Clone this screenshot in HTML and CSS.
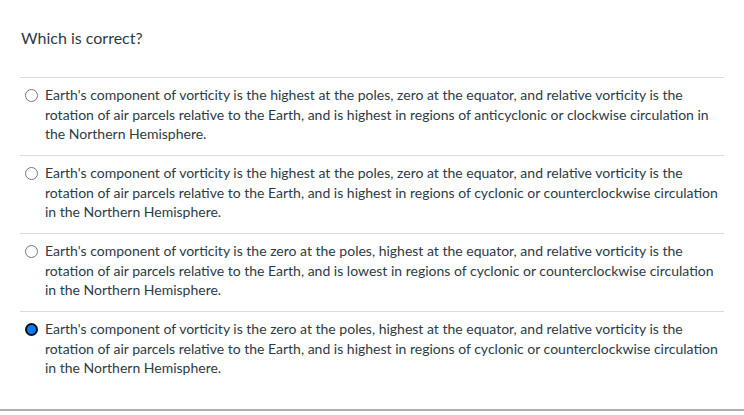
FILE: index.html
```html
<!DOCTYPE html>
<html>
<head>
<meta charset="utf-8">
<link rel="stylesheet" href="styles.css">
</head>
<body>
<div class="quiz">
  <div class="question">Which is correct?</div>
  <div class="answers">
    <label class="answer">
      <span class="radio"></span>
      <span class="text">Earth's component of vorticity is the highest at the poles, zero at the equator, and relative vorticity is the rotation of air parcels relative to the Earth, and is highest in regions of anticyclonic or clockwise circulation in the Northern Hemisphere.</span>
    </label>
    <label class="answer">
      <span class="radio"></span>
      <span class="text">Earth's component of vorticity is the highest at the poles, zero at the equator, and relative vorticity is the rotation of air parcels relative to the Earth, and is highest in regions of cyclonic or counterclockwise circulation in the Northern Hemisphere.</span>
    </label>
    <label class="answer">
      <span class="radio"></span>
      <span class="text">Earth's component of vorticity is the zero at the poles, highest at the equator, and relative vorticity is the rotation of air parcels relative to the Earth, and is lowest in regions of cyclonic or counterclockwise circulation in the Northern Hemisphere.</span>
    </label>
    <label class="answer last">
      <span class="radio checked"></span>
      <span class="text">Earth's component of vorticity is the zero at the poles, highest at the equator, and relative vorticity is the rotation of air parcels relative to the Earth, and is highest in regions of cyclonic or counterclockwise circulation in the Northern Hemisphere.</span>
    </label>
  </div>
</div>
</body>
</html>
```
FILE: styles.css
```css
html, body {
  margin: 0;
  padding: 0;
  background: #fff;
}
body {
  font-family: Lato, "Open Sans", sans-serif;
  color: #2d3b45;
}
.quiz {
  width: 744px;
  border-bottom: 2px solid #b0b0b0;
}
.question {
  font-size: 16px;
  line-height: 20px;
  padding: 28px 0 0 21px;
  height: 49px;
}
.answers {
  margin: 0 20px;
}
.answer {
  display: flex;
  align-items: flex-start;
  border-top: 1px solid #dcdcdc;
  padding: 7px 0 11px 5px;
  min-height: 59px;
}
.answer.last {
  padding-bottom: 31px;
}
.radio {
  flex: none;
  box-sizing: border-box;
  width: 13px;
  height: 13px;
  border-radius: 50%;
  border: 1px solid #777;
  margin-top: 4px;
  margin-right: 7px;
  background: #fff;
}
.radio.checked {
  border: 2.5px solid #111;
  background: #0b7bff;
}
.text {
  font-size: 14px;
  line-height: 19.6px;
}
```
